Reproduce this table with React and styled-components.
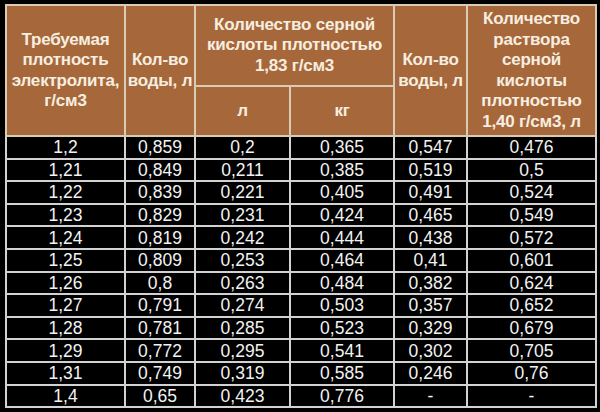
import React from "react";
import styled, { createGlobalStyle } from "styled-components";

const Global = createGlobalStyle`
  html, body { margin: 0; padding: 0; background: #000; }
  body { width: 600px; height: 412px; overflow: hidden; font-family: "Liberation Sans", Arial, sans-serif; }
`;

const Page = styled.div`
  padding: 4px 5px 0 5px;
`;

const Table = styled.table`
  width: 590px;
  table-layout: fixed;
  border-collapse: collapse;
  border: 2px solid #d6d0c6;
  font-family: "Liberation Sans", Arial, sans-serif;
`;

const HeadRow = styled.tr`
  height: ${(p) => p.$h}px;
`;

const HeadCell = styled.th`
  background: #a6683a;
  color: #f6eee0;
  font-weight: bold;
  font-size: 17px;
  line-height: 20.5px;
  text-align: center;
  vertical-align: middle;
  padding: 0;
  border: 2px solid #d9ccb4;
  letter-spacing: -0.2px;
`;

const Row = styled.tr`
  height: 22.6px;
`;

const Cell = styled.td`
  background: #000;
  color: #f2f2f2;
  font-size: 17.5px;
  line-height: 18px;
  text-align: center;
  vertical-align: middle;
  padding: 0;
  border: 2px solid #d2d2d2;
`;

const rows = [
  ["1,2", "0,859", "0,2", "0,365", "0,547", "0,476"],
  ["1,21", "0,849", "0,211", "0,385", "0,519", "0,5"],
  ["1,22", "0,839", "0,221", "0,405", "0,491", "0,524"],
  ["1,23", "0,829", "0,231", "0,424", "0,465", "0,549"],
  ["1,24", "0,819", "0,242", "0,444", "0,438", "0,572"],
  ["1,25", "0,809", "0,253", "0,464", "0,41", "0,601"],
  ["1,26", "0,8", "0,263", "0,484", "0,382", "0,624"],
  ["1,27", "0,791", "0,274", "0,503", "0,357", "0,652"],
  ["1,28", "0,781", "0,285", "0,523", "0,329", "0,679"],
  ["1,29", "0,772", "0,295", "0,541", "0,302", "0,705"],
  ["1,31", "0,749", "0,319", "0,585", "0,246", "0,76"],
  ["1,4", "0,65", "0,423", "0,776", "-", "-"],
];

const widths = [119, 70, 95, 104, 73, 129];

export default function App() {
  return (
    <Page>
      <Global />
      <Table>
        <colgroup>
          {widths.map((w, i) => (
            <col key={i} style={{ width: w }} />
          ))}
        </colgroup>
        <thead>
          <HeadRow $h={81}>
            <HeadCell rowSpan={2}>
              Требуемая
              <br />
              плотность
              <br />
              электролита,
              <br />
              г/см3
            </HeadCell>
            <HeadCell rowSpan={2}>
              Кол-во
              <br />
              воды, л
            </HeadCell>
            <HeadCell colSpan={2}>
              Количество серной
              <br />
              кислоты плотностью
              <br />
              1,83 г/см3
            </HeadCell>
            <HeadCell rowSpan={2}>
              Кол-во
              <br />
              воды, л
            </HeadCell>
            <HeadCell rowSpan={2}>
              Количество
              <br />
              раствора
              <br />
              серной
              <br />
              кислоты
              <br />
              плотностью
              <br />
              1,40 г/см3, л
            </HeadCell>
          </HeadRow>
          <HeadRow $h={50}>
            <HeadCell>л</HeadCell>
            <HeadCell>кг</HeadCell>
          </HeadRow>
        </thead>
        <tbody>
          {rows.map((r, i) => (
            <Row key={i}>
              {r.map((v, j) => (
                <Cell key={j}>{v}</Cell>
              ))}
            </Row>
          ))}
        </tbody>
      </Table>
    </Page>
  );
}
